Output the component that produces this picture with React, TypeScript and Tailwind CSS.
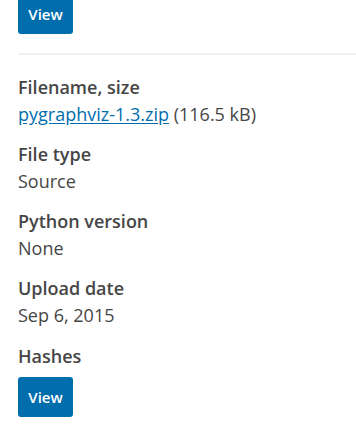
const rows = [
  { label: 'File type', value: 'Source' },
  { label: 'Python version', value: 'None' },
  { label: 'Upload date', value: 'Sep 6, 2015' },
]

function ViewButton() {
  return (
    <button className="h-[40px] w-[55px] rounded-[3px] bg-[#006dad] text-[15px] font-semibold text-white">
      View
    </button>
  )
}

export default function App() {
  return (
    <div
      className="min-h-screen bg-white pl-[18px] text-[18px] leading-[27px] text-[#464646]"
      style={{ fontFamily: '"Open Sans", "Liberation Sans", sans-serif' }}
    >
      <div className="-mt-[6px]">
        <ViewButton />
      </div>
      <div className="mt-[19px] h-[2px] bg-[#f1f1f1]" />
      <dl className="pt-[19px]">
        <dt className="font-semibold">Filename, size</dt>
        <dd>
          <a href="#" className="text-[#006dad] underline underline-offset-2">
            pygraphviz-1.3.zip
          </a>{' '}
          (116.5 kB)
        </dd>
        {rows.map((r) => (
          <div key={r.label} className="mt-[13px]">
            <dt className="font-semibold">{r.label}</dt>
            <dd>{r.value}</dd>
          </div>
        ))}
        <dt className="mt-[14px] font-semibold">Hashes</dt>
        <dd className="mt-[7px]">
          <ViewButton />
        </dd>
      </dl>
    </div>
  )
}
